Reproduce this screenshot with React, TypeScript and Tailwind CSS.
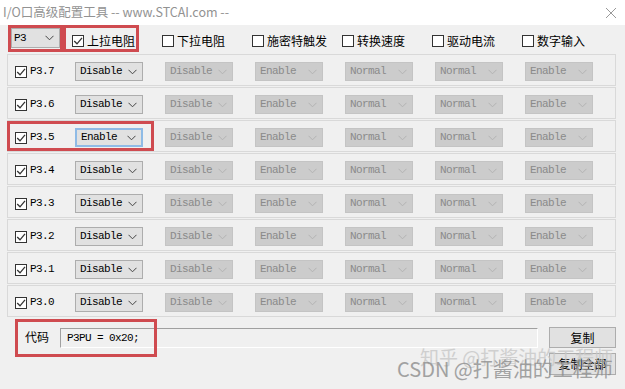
import React from 'react';

const cjk = "font-['Noto_Sans_CJK_SC','Noto_Sans',sans-serif]";
const mono = "font-['Liberation_Mono','Noto_Sans_CJK_SC',monospace] text-[11px] tracking-[-0.6px]";

const columns = ['上拉电阻', '下拉电阻', '施密特触发', '转换速度', '驱动电流', '数字输入'];

interface PinRow {
    name: string;
    first: string;
}

const rows: PinRow[] = [
    { name: 'P3.7', first: 'Disable' },
    { name: 'P3.6', first: 'Disable' },
    { name: 'P3.5', first: 'Enable' },
    { name: 'P3.4', first: 'Disable' },
    { name: 'P3.3', first: 'Disable' },
    { name: 'P3.2', first: 'Disable' },
    { name: 'P3.1', first: 'Disable' },
    { name: 'P3.0', first: 'Disable' },
];

const disabledValues = ['Disable', 'Enable', 'Normal', 'Normal', 'Enable'];

function Chevron({ color }: { color: string }) {
    return (
        <svg width="9" height="6" viewBox="0 0 9 6" className="shrink-0">
            <path d="M0.5 0.8 L4.5 4.8 L8.5 0.8" fill="none" stroke={color} strokeWidth="1" />
        </svg>
    );
}

function CheckBox({ checked }: { checked: boolean }) {
    return (
        <div className="w-[12px] h-[12px] border border-[#333] bg-white flex items-center justify-center shrink-0">
            {checked && (
                <svg width="10" height="10" viewBox="0 0 10 10">
                    <path d="M1.2 5 L4 7.8 L9 1.8" fill="none" stroke="#333" strokeWidth="1.3" />
                </svg>
            )}
        </div>
    );
}

function Select({ value, disabled, focused, width = 'w-[68px]' }: { value: string; disabled?: boolean; focused?: boolean; width?: string }) {
    if (disabled) {
        return (
            <div className={`${width} h-[19px] bg-[#cccccc] border border-[#c4c4c4] flex items-center justify-between pl-[4px] pr-[5px]`}>
                <span className={`${mono} text-[#8a8a8a]`}>{value}</span>
                <Chevron color="#b3b3b3" />
            </div>
        );
    }
    return (
        <div
            className={`${width} h-[19px] bg-[#e1e1e1] flex items-center justify-between pl-[4px] pr-[5px] ${
                focused ? 'border-2 border-[#8fbbe6]' : 'border border-[#adadad]'
            }`}
        >
            <span className={`${mono} text-black`}>{value}</span>
            <Chevron color="#444" />
        </div>
    );
}

export default function App() {
    return (
        <div className="relative w-[625px] h-[389px] bg-[#f0f0f0] overflow-hidden">
            {/* title bar */}
            <div className="h-[25px] bg-white flex items-center justify-between pl-[3px] pr-[8px]">
                <span className={`${cjk} text-[12.5px] text-[#929292]`}>I/O口高级配置工具 -- www.STCAI.com --</span>
                <svg width="12" height="12" viewBox="0 0 12 12">
                    <path d="M1 1 L11 11 M11 1 L1 11" stroke="#999" strokeWidth="1" />
                </svg>
            </div>

            {/* port + column headers */}
            <div className="flex items-start mt-[3px] pl-[11px] h-[20px]">
                <div className="w-[49px] h-[20px] bg-[#e1e1e1] border border-[#adadad] flex items-center justify-between pl-[2px] pr-[5px]">
                    <span className={`${mono} text-black`}>P3</span>
                    <Chevron color="#444" />
                </div>
                <div className="flex ml-[12px] mt-[7px]">
                    {columns.map((c, i) => (
                        <div key={c} className="w-[90px] flex items-center gap-[3px]">
                            <CheckBox checked={i === 0} />
                            <span className={`${cjk} text-[12px] text-black leading-none`}>{c}</span>
                        </div>
                    ))}
                </div>
            </div>

            {/* pin rows */}
            <div className="flex flex-col gap-[1px] mt-[6px] ml-[7px] w-[609px]">
                {rows.map((r) => (
                    <div key={r.name} className="h-[32px] border border-[#d9d9d9] flex items-center pt-[3px] pl-[7px]">
                        <CheckBox checked />
                        <span className={`${mono} text-black ml-[3px] w-[45px]`}>{r.name}</span>
                        <div className="flex gap-[22px]">
                            <Select value={r.first} focused={r.name === 'P3.5'} />
                            {disabledValues.map((v, i) => (
                                <Select key={i} value={v} disabled />
                            ))}
                        </div>
                    </div>
                ))}
            </div>

            {/* code output */}
            <div className="flex items-start mt-[10px] pl-[25px]">
                <span className={`${cjk} text-[12px] text-black w-[35px] mt-[1px]`}>代码</span>
                <div className="w-[478px] h-[20px] mt-[1px] bg-[#f0f0f0] border-t border-l border-t-[#a0a0a0] border-l-[#a0a0a0] border-b border-r border-b-white border-r-white flex items-center pl-[6px]">
                    <span className={`${mono} text-black`}>P3PU = 0x20;</span>
                </div>
                <div className="flex flex-col ml-[11px] gap-[5px]">
                    <button className={`w-[67px] h-[21px] bg-[#e1e1e1] border border-[#adadad] ${cjk} text-[12px] text-black`}>复制</button>
                    <button className={`w-[67px] h-[22px] bg-[#e1e1e1] border border-[#adadad] ${cjk} text-[12px] text-black`}>复制全部</button>
                </div>
            </div>

            {/* annotation boxes */}
            <div className="absolute left-[8px] top-[25px] w-[55px] h-[27px] border-[3px] border-[#cf4b50]" />
            <div className="absolute left-[63px] top-[25px] w-[76px] h-[27px] border-[3px] border-[#cf4b50]" />
            <div className="absolute left-[7px] top-[121px] w-[147px] h-[30px] border-[3px] border-[#cf4b50]" />
            <div className="absolute left-[15px] top-[319px] w-[142px] h-[38px] border-[3px] border-[#cf4b50]" />

            {/* watermarks */}
            <div className={`absolute left-[420px] top-[343px] ${cjk} text-[19px] text-[#c8c8c8] opacity-80 whitespace-nowrap`}>知乎 @打酱油的工程师</div>
            <div className={`absolute left-[397px] top-[354px] ${cjk} text-[20px] text-[#8e8e8e] opacity-80 whitespace-nowrap`}>CSDN @打酱油的工程师</div>
        </div>
    );
}
